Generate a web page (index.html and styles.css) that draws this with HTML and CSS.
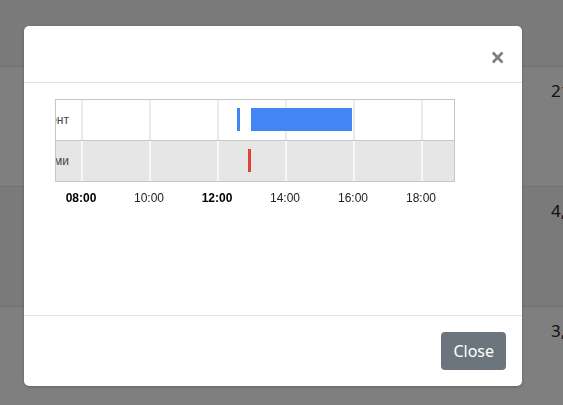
FILE: index.html
```html
<!DOCTYPE html>
<html>
  <head>
    <title>Timeline</title>
    <link rel="stylesheet" href="styles.css">
  </head>
  <body>
    <div class="page">
      <div class="page-head"></div>
      <div class="page-row"><span>21</span></div>
      <div class="page-row striped"><span>4,</span></div>
      <div class="page-row"><span>3,</span></div>
    </div>

    <div class="backdrop"></div>

    <div class="modal">
      <div class="modal-header">
        <button class="close">&times;</button>
      </div>

      <div class="modal-body">
        <div class="timeline">
          <div class="tl-row">
            <div class="tl-label"><span>Клиент</span></div>
            <div class="tl-track">
              <i class="grid" style="left: 0"></i>
              <i class="grid" style="left: 68px"></i>
              <i class="grid" style="left: 136px"></i>
              <i class="grid" style="left: 204px"></i>
              <i class="grid" style="left: 272px"></i>
              <i class="grid" style="left: 340px"></i>
              <div class="bar blue" style="left: 156px; width: 3px"></div>
              <div class="bar blue" style="left: 170px; width: 101px"></div>
            </div>
          </div>
          <div class="tl-row alt">
            <div class="tl-label"><span>Встречи с клиентами</span></div>
            <div class="tl-track">
              <i class="grid" style="left: 0"></i>
              <i class="grid" style="left: 68px"></i>
              <i class="grid" style="left: 136px"></i>
              <i class="grid" style="left: 204px"></i>
              <i class="grid" style="left: 272px"></i>
              <i class="grid" style="left: 340px"></i>
              <div class="bar red" style="left: 167px; width: 3px"></div>
            </div>
          </div>
        </div>
        <div class="axis">
          <span class="tick bold" style="left: 0">08:00</span>
          <span class="tick" style="left: 68px">10:00</span>
          <span class="tick bold" style="left: 136px">12:00</span>
          <span class="tick" style="left: 204px">14:00</span>
          <span class="tick" style="left: 272px">16:00</span>
          <span class="tick" style="left: 340px">18:00</span>
        </div>
      </div>

      <div class="modal-footer">
        <button class="btn">Close</button>
      </div>
    </div>
  </body>
</html>
```

FILE: styles.css
```css
html, body {
  margin: 0;
  height: 100%;
  overflow: hidden;
}
body {
  font-family: "Noto Sans", "Open Sans", sans-serif;
  color: #212529;
  background-color: #fff;
}
.page-head {
  height: 66px;
  background-color: #f4f4f4;
  border-bottom: 1px solid #dee2e6;
}
.page-row {
  height: 120px;
  border-bottom: 1px solid #dee2e6;
  display: flex;
  justify-content: flex-end;
  padding-top: 12px;
  box-sizing: border-box;
  font-size: 17px;
}
.page-row span {
  width: 12px;
  overflow: hidden;
  white-space: nowrap;
}
.page-row.striped {
  background-color: #f4f4f4;
}
.backdrop {
  position: fixed;
  inset: 0;
  background-color: rgba(0, 0, 0, 0.5);
}
.modal {
  position: fixed;
  top: 26px;
  left: 24px;
  width: 498px;
  background-color: #fff;
  border-radius: 5px;
  box-shadow: 0 1px 3px rgba(0, 0, 0, 0.25);
}
.modal-header {
  height: 56px;
  border-bottom: 1px solid #e2e2e2;
  display: flex;
  justify-content: flex-end;
  align-items: center;
  padding: 0 17px;
}
.close {
  background: none;
  border: none;
  padding: 0;
  margin-top: 5px;
  font-family: "Noto Sans", sans-serif;
  font-size: 26px;
  font-weight: bold;
  line-height: 1;
  color: #000;
  opacity: 0.5;
}
.modal-body {
  height: 232px;
  box-sizing: border-box;
  padding: 16px 0 0 31px;
}
.timeline {
  width: 398px;
  border: 1px solid #c6c6c6;
  font-family: "Liberation Sans", Arial, sans-serif;
}
.tl-row {
  display: flex;
  height: 40px;
  background-color: #fff;
}
.tl-row.alt {
  background-color: #e6e6e6;
  border-top: 1px solid #c6c6c6;
}
.tl-label {
  width: 25px;
  display: flex;
  justify-content: flex-end;
  align-items: center;
  overflow: hidden;
  font-size: 12px;
  font-weight: normal;
  color: #444;
}
.tl-label span {
  white-space: nowrap;
  padding-right: 12px;
}
.tl-track {
  position: relative;
  flex: 1;
}
.grid {
  position: absolute;
  top: 0;
  bottom: 0;
  width: 2px;
  background-color: #ebebeb;
}
.alt .grid {
  background-color: #f7f7f7;
}
.bar {
  position: absolute;
  top: 8px;
  height: 23px;
}
.bar.blue {
  background-color: #4285f4;
}
.bar.red {
  background-color: #db4437;
}
.axis {
  position: relative;
  margin-left: 26px;
  height: 30px;
  font-family: "Liberation Sans", Arial, sans-serif;
  font-size: 12px;
  color: #222;
}
.tick {
  position: absolute;
  top: 9px;
  transform: translateX(-50%);
}
.tick.bold {
  font-weight: bold;
  color: #000;
}
.modal-footer {
  border-top: 1px solid #e2e2e2;
  display: flex;
  justify-content: flex-end;
  padding: 16px;
}
.btn {
  height: 38px;
  padding: 0 12px;
  border: none;
  border-radius: 4px;
  background-color: #6c757d;
  color: #fff;
  font-family: "Noto Sans", sans-serif;
  font-size: 16px;
}
```
